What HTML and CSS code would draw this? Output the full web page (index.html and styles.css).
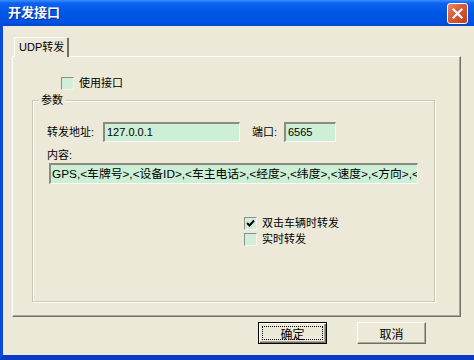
FILE: index.html
```html
<!DOCTYPE html>
<html lang="zh">
<head>
    <meta charset="UTF-8">
    <title>开发接口</title>
    <link rel="stylesheet" href="styles.css">
</head>
<body>
<div class="window">
    <div class="titlebar">
        <span class="title">开发接口</span>
        <span class="close">
            <svg width="11" height="11" viewBox="0 0 11 11"><path d="M1.5 1.5L9.5 9.5M9.5 1.5L1.5 9.5" stroke="#fff" stroke-width="2.2" stroke-linecap="square"/></svg>
        </span>
    </div>
    <div class="client">
        <div class="tabs">
            <div class="tab">UDP转发</div>
        </div>
        <div class="panel">
            <div class="check enable"><span class="box"></span>使用接口</div>
            <div class="group">
                <span class="group-title">参数</span>
                <div class="row">
                    <span class="lbl addr-lbl">转发地址:</span>
                    <span class="field addr">127.0.0.1</span>
                    <span class="lbl port-lbl">端口:</span>
                    <span class="field port">6565</span>
                </div>
                <div class="lbl content-lbl">内容:</div>
                <div class="field content">GPS,&lt;车牌号&gt;,&lt;设备ID&gt;,&lt;车主电话&gt;,&lt;经度&gt;,&lt;纬度&gt;,&lt;速度&gt;,&lt;方向&gt;,&lt;GPS时间&gt;</div>
                <div class="opts">
                    <div class="check">
                        <span class="box">
                            <svg width="9" height="9" viewBox="0 0 9 9"><path d="M1 4L3.5 6.5L8 1.5" fill="none" stroke="#000" stroke-width="2"/></svg>
                        </span>双击车辆时转发
                    </div>
                    <div class="check"><span class="box"></span>实时转发</div>
                </div>
            </div>
        </div>
        <div class="buttons">
            <button class="btn default"><span class="focus">确定</span></button>
            <button class="btn">取消</button>
        </div>
    </div>
</div>
</body>
</html>
```

FILE: styles.css
```css
body {
    margin: 0; padding: 0;
    background: #ECE9D8;
    font-family: Tahoma, "Liberation Sans", "Noto Sans CJK SC", sans-serif;
    font-size: 11px;
    color: #000;
}
.window {
    width: 474px; height: 360px;
    display: flex; flex-direction: column;
}
.titlebar {
    height: 26px; flex: none;
    display: flex; align-items: center; justify-content: space-between;
    padding: 0 6px 0 8px;
    background: linear-gradient(to bottom, #3C8EFF 0%, #0B62F0 12%, #0056E6 50%, #0052E2 85%, #0046CC 100%);
}
.title {
    color: #fff; font-size: 13px; font-weight: bold; line-height: 16px;
    text-shadow: 1px 1px #0A2A90;
}
.close {
    width: 19px; height: 19px;
    border: 1px solid #fff; border-radius: 3px;
    background: linear-gradient(135deg, #EC8A66 0%, #DA5A33 45%, #C23E1A 100%);
    display: flex; align-items: center; justify-content: center;
}
.close svg {
    display: block;
}
.client {
    flex: 1;
    border-left: 3px solid #0B4BDA;
    border-bottom: 5px solid #0A3BC4;
    padding: 11px 0 0 9px;
}
.tabs {
    height: 19px;
    padding-left: 2px;
    display: flex;
}
.tab {
    width: 55px; height: 20px; box-sizing: border-box;
    border-top: 1px solid #fff; border-left: 1px solid #fff;
    border-right: 2px solid #716F64;
    border-radius: 2px 2px 0 0;
    background: #ECE9D8;
    padding-left: 4px;
    line-height: 19px;
    position: relative; z-index: 1;
}
.panel {
    width: 449px; height: 261px; box-sizing: border-box;
    border-top: 1px solid #fff; border-left: 1px solid #fff;
    border-right: 1px solid #716F64; border-bottom: 1px solid #716F64;
    box-shadow: inset -1px -1px #ACA899;
    padding: 20px 0 0 19px;
}
.check {
    display: flex; align-items: center;
    height: 13px; line-height: 13px;
}
.box {
    width: 11px; height: 11px; flex: none;
    border-top: 1px solid #8A9188; border-left: 1px solid #8A9188;
    border-right: 1px solid #F4F4EE; border-bottom: 1px solid #F4F4EE;
    background: #D2EEDB;
    margin-right: 5px;
    display: flex; align-items: center; justify-content: center;
}
.enable {
    margin-left: 29px;
}
.group {
    width: 403px; height: 202px; box-sizing: border-box;
    margin-top: 10px;
    border: 1px solid #C9C6B6;
    box-shadow: inset 1px 1px #fff, 1px 1px #fff;
    padding: 21px 0 0 14px;
    position: relative;
}
.group-title {
    position: absolute; top: -7px; left: 6px;
    padding: 0 2px;
    background: #ECE9D8;
    line-height: 13px;
}
.row {
    display: flex; align-items: center;
    height: 20px;
}
.lbl {
    line-height: 13px;
    white-space: nowrap;
}
.addr-lbl {
    width: 56px;
}
.port-lbl {
    width: 32px; margin-left: 12px;
}
.field {
    box-sizing: border-box;
    height: 20px;
    border-top: 2px solid #8C8B80; border-left: 2px solid #8C8B80;
    border-right: 1px solid #FAFAF6; border-bottom: 1px solid #FAFAF6;
    background: #CCEFD6;
    padding-left: 2px;
    line-height: 17px;
    white-space: nowrap; overflow: hidden;
}
.addr {
    width: 137px;
}
.port {
    width: 52px;
}
.content-lbl {
    margin-top: 7px;
}
.content {
    width: 369px; height: 21px;
    margin: 1px 0 0 2px;
    padding-left: 1px;
    font-size: 11.8px;
    line-height: 18px;
}
.opts {
    margin: 33px 0 0 197px;
    display: flex; flex-direction: column; gap: 3px;
}
.buttons {
    display: flex; justify-content: flex-end; gap: 30px;
    padding-right: 48px;
    margin-top: 5px;
}
.btn {
    width: 69px; height: 22px; box-sizing: border-box;
    margin: 0; padding: 0;
    font: inherit;
    font-size: 12px;
    background: #ECE9D8;
    border-top: 1px solid #fff; border-left: 1px solid #fff;
    border-right: 1px solid #716F64; border-bottom: 1px solid #716F64;
    box-shadow: inset -1px -1px #ACA899;
    display: flex; align-items: center; justify-content: center;
}
.default {
    border: 1px solid #000;
    box-shadow: inset 1px 1px #fff, inset -1px -1px #716F64, inset -2px -2px #ACA899;
    padding: 3px;
}
.focus {
    flex: 1; align-self: stretch;
    border: 1px dotted #000;
    display: flex; align-items: center; justify-content: center;
}
```
